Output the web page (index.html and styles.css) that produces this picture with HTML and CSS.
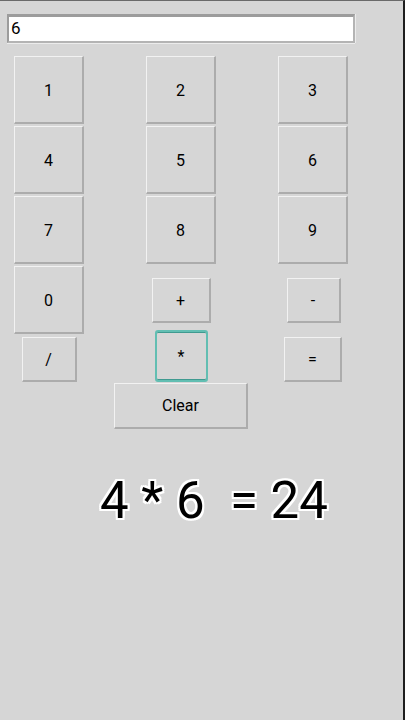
FILE: index.html
```html
<!DOCTYPE html>
<html>
<head>
<meta charset="utf-8">
<link rel="stylesheet" href="styles.css">
</head>
<body>
<div class="screen">
  <div class="display">6</div>
  <div class="pad">
    <button class="key big">1</button>
    <button class="key big">2</button>
    <button class="key big">3</button>
    <button class="key big">4</button>
    <button class="key big">5</button>
    <button class="key big">6</button>
    <button class="key big">7</button>
    <button class="key big">8</button>
    <button class="key big">9</button>
    <button class="key big">0</button>
    <button class="key op plus">+</button>
    <button class="key op minus">-</button>
    <button class="key op div">/</button>
    <button class="key op mul">*</button>
    <button class="key op eq">=</button>
    <button class="key clear">Clear</button>
  </div>
  <div class="result">4 * 6 &nbsp;= 24</div>
</div>
</body>
</html>
```
FILE: styles.css
```css
html, body {
  margin: 0;
  padding: 0;
}
body {
  width: 405px;
  height: 720px;
  overflow: hidden;
  background: #d6d6d6;
  font-family: Roboto, "Liberation Sans", sans-serif;
}
.screen {
  box-sizing: border-box;
  width: 405px;
  height: 720px;
  border-top: 1px solid #6a6a6a;
  border-right: 2px solid #1e1e1e;
  background: #d6d6d6;
  padding: 13px 0 0 7px;
}
.display {
  box-sizing: border-box;
  width: 348px;
  height: 29px;
  background: #fff;
  border-top: 3px solid #9c9c9c;
  border-left: 2px solid #9c9c9c;
  border-bottom: 2px solid #b4b4b4;
  border-right: 2px solid #b4b4b4;
  box-shadow: 0 1px 0 #ececec, 1px 0 0 #ececec;
  font-size: 17px;
  line-height: 22px;
  padding-left: 2px;
  color: #000;
}
.pad {
  display: grid;
  grid-template-columns: repeat(3, 70px);
  grid-template-rows: 68px 68px 68px 62px 52px 46px;
  column-gap: 62px;
  row-gap: 2px;
  margin: 13px 0 0 7px;
  justify-items: center;
}
.key {
  box-sizing: border-box;
  margin: 0;
  padding: 0;
  background: #d6d6d6;
  color: #000;
  font-family: Roboto, "Liberation Sans", sans-serif;
  font-size: 16px;
  border: none;
  border-top: 1px solid #f2f2f2;
  border-left: 1px solid #f2f2f2;
  border-right: 2px solid #acacac;
  border-bottom: 2px solid #acacac;
}
.big {
  width: 70px;
  height: 68px;
  align-self: start;
  padding-top: 2px;
}
.op {
  height: 45px;
}
.plus {
  width: 59px;
  align-self: start;
  margin-top: 12px;
}
.minus {
  width: 54px;
  align-self: start;
  margin-top: 12px;
  margin-left: 1px;
}
.div {
  width: 55px;
  align-self: end;
}
.mul {
  width: 53px;
  height: 52px;
  align-self: end;
  border: 2px solid #62beb2;
  border-radius: 3px;
  box-shadow: inset 0 1px 0 #3f9a90, inset 0 -1px 0 #3f9a90;
}
.eq {
  width: 58px;
  align-self: end;
}
.clear {
  grid-column: 2;
  width: 134px;
  height: 46px;
  margin-top: -1px;
  align-self: start;
  font-size: 16px;
}
.result {
  margin: 41px 0 0 93px;
  font-size: 51px;
  line-height: 60px;
  color: #000;
  white-space: pre;
  text-shadow:
    -2px -2px 0 #fff, 2px -2px 0 #fff, -2px 2px 0 #fff, 2px 2px 0 #fff,
    0 -2px 0 #fff, 0 2px 0 #fff, -2px 0 0 #fff, 2px 0 0 #fff;
}
```
